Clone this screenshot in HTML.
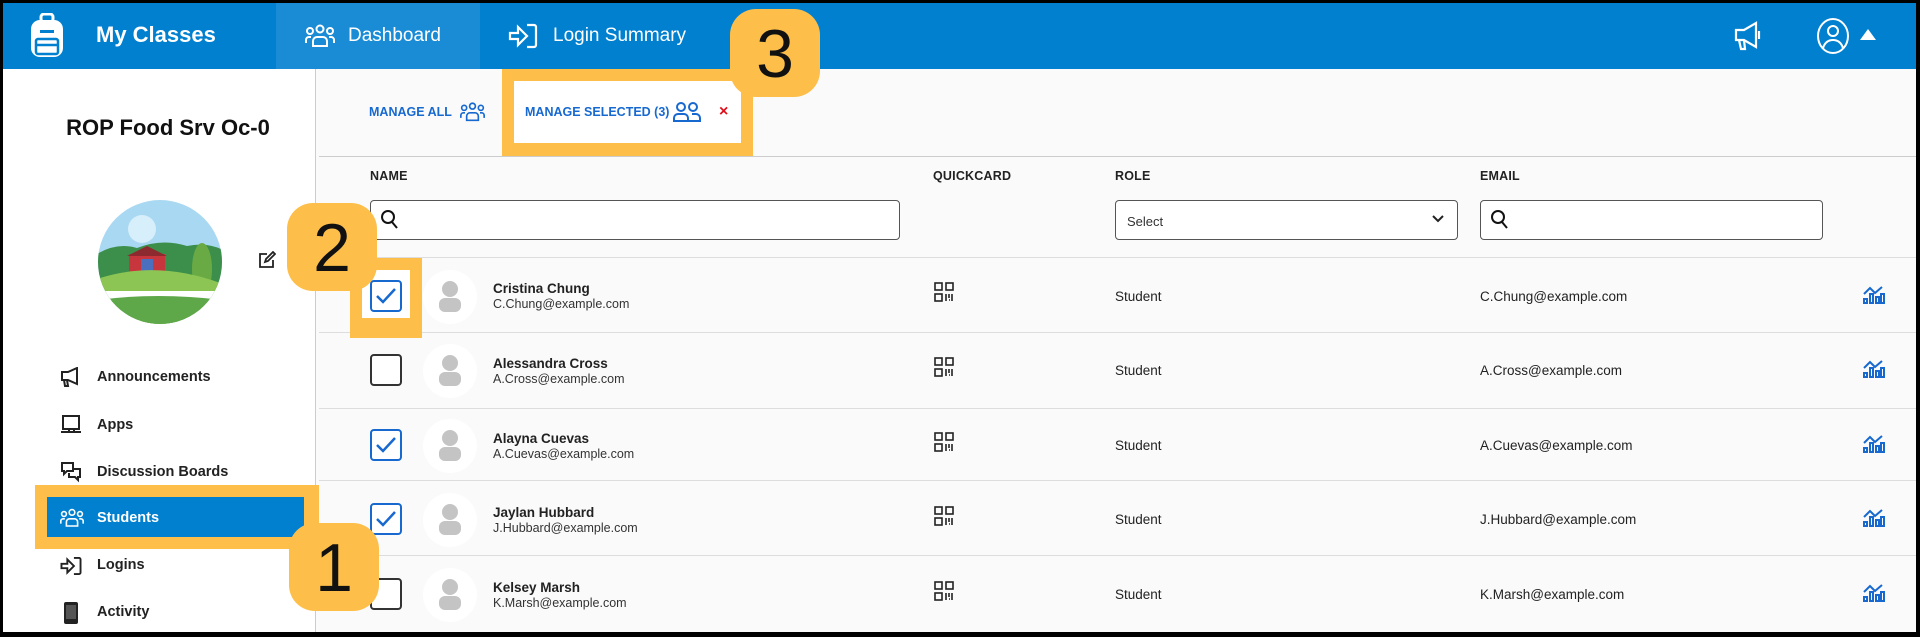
<!DOCTYPE html>
<html><head><meta charset="utf-8"><style>
*{box-sizing:border-box;margin:0;padding:0}
body{width:1920px;height:637px;background:#000;position:relative;overflow:hidden;font-family:"Liberation Sans",sans-serif;color:#222}
.a{position:absolute}
#page{position:absolute;left:3px;top:3px;width:1913px;height:629px;background:#fafafa;overflow:hidden}
.hdr{left:0;top:0;width:1913px;height:66px;background:#0180cf}
.w{color:#fff}
.nav{font-weight:bold;font-size:14.5px;color:#222}
.th{font-weight:bold;font-size:12.5px;color:#222;letter-spacing:.2px}
.box{background:#fff;border:1.5px solid #555;border-radius:4px;height:40px}
.line{height:1px;background:#ddd;left:316px;width:1600px}
.badge{background:#fdbf4a;border-radius:26px;font-size:68px;color:#111;text-align:center;line-height:90px;width:90px;height:88px}
.cb{width:32px;height:32px;border:2px solid #333;border-radius:4px;background:#fff}
.cb.on{border-color:#1769d0}
.av{width:54px;height:54px;border-radius:50%;background:#fff}
.nm{font-size:13.5px;font-weight:bold}
.em{font-size:12.5px;color:#333}
.td{font-size:13.5px;color:#222}
</style></head><body>
<div id="page">
<div class="a hdr"></div>
<div class="a" style="left:273px;top:0;width:204px;height:66px;background:#1a8cd6"></div>
<svg class="a" style="left:25px;top:10px" width="38" height="46" viewBox="0 0 38 46"><rect x="13" y="1" width="12" height="8" rx="3" fill="none" stroke="#fff" stroke-width="3"/><rect x="3" y="7" width="32" height="37" rx="9" fill="#fff"/><rect x="12" y="17" width="14" height="3" fill="#0180cf"/><rect x="8" y="26" width="22" height="15" rx="2" fill="none" stroke="#0180cf" stroke-width="2.5"/><line x1="8" y1="32" x2="30" y2="32" stroke="#0180cf" stroke-width="2.5"/></svg>
<div class="a w" style="left:93px;top:19px;font-size:22px;font-weight:bold">My Classes</div>
<svg class="a" style="left:302px;top:21px" width="30" height="24" viewBox="0 0 30 24" fill="none" stroke="#fff" stroke-width="2"><circle cx="15" cy="5" r="3.5"/><circle cx="5" cy="7" r="3"/><circle cx="25" cy="7" r="3"/><path d="M8 22v-5a4 4 0 0 1 4-4h6a4 4 0 0 1 4 4v5z"/><path d="M1 19v-3a3 3 0 0 1 3-3h2M29 19v-3a3 3 0 0 0-3-3h-2"/></svg>
<div class="a w" style="left:345px;top:22px;font-size:19px">Dashboard</div>
<svg class="a" style="left:505px;top:20px" width="30" height="26" viewBox="0 0 30 26" fill="none" stroke="#fff" stroke-width="2.2"><path d="M2 10h8V4l9 9-9 9v-6H2z"/><path d="M19 2h7a2 2 0 0 1 2 2v18a2 2 0 0 1-2 2h-7"/></svg>
<div class="a w" style="left:550px;top:22px;font-size:19px">Login Summary</div>
<svg class="a" style="left:1730px;top:18px" width="32" height="30" viewBox="0 0 32 30" fill="none" stroke="#fff" stroke-width="2.2"><path d="M3 9h8l12-7v24l-12-7H3z"/><path d="M6 19l2 9h4l-1-9"/><path d="M26 10v8"/></svg>
<svg class="a" style="left:1813px;top:13px" width="36" height="40" viewBox="0 0 36 40" fill="none" stroke="#fff" stroke-width="2"><ellipse cx="17" cy="20" rx="15" ry="17"/><circle cx="17" cy="15" r="5"/><path d="M7 32c2-6 6-8 10-8s8 2 10 8"/></svg>
<svg class="a" style="left:1857px;top:25px" width="16" height="12"><path d="M0 12L8 1l8 11z" fill="#fff"/></svg>

<div class="a" style="left:0;top:66px;width:313px;height:570px;background:#fff;border-right:1px solid #ccc"></div>
<div class="a" style="left:0;top:112px;width:330px;text-align:center;font-size:22px;font-weight:bold;color:#111">ROP Food Srv Oc-0</div>
<svg class="a" style="left:94px;top:196px" width="126" height="126" viewBox="0 0 126 126"><defs><clipPath id="c"><circle cx="63" cy="63" r="62"/></clipPath></defs><g clip-path="url(#c)"><rect width="126" height="126" fill="#a9d8f2"/><circle cx="45" cy="30" r="14" fill="#d7eefb"/><path d="M0 55 q20-12 40-6 q25-10 50-2 q20-4 36 4 v75H0z" fill="#3c8f4a"/><rect x="32" y="55" width="36" height="22" fill="#c8363d"/><path d="M30 57l20-10 20 10z" fill="#8c2a30"/><rect x="44" y="60" width="12" height="17" fill="#4a6fbf"/><ellipse cx="105" cy="70" rx="10" ry="26" fill="#6aaa45"/><path d="M0 80 q60-20 126 5 v41H0z" fill="#8cc554"/><rect x="0" y="92" width="126" height="9" fill="#fff"/><path d="M0 101 q60-8 126 0 v25H0z" fill="#5fa84a"/></g></svg>
<svg class="a" style="left:255px;top:248px" width="18" height="18" viewBox="0 0 18 18" fill="none" stroke="#222" stroke-width="1.8"><path d="M9 3H2v13h13V9"/><path d="M7 11l1-3 7-7 2 2-7 7z"/></svg>

<svg class="a" style="left:57px;top:364px" width="22" height="20" viewBox="0 0 22 20" fill="none" stroke="#222" stroke-width="2"><path d="M2 5h6l9-4v16l-9-4H2z"/><path d="M4 13l1 6h3l-1-6"/></svg>
<div class="a nav" style="left:94px;top:366px">Announcements</div>
<svg class="a" style="left:57px;top:411px" width="22" height="20" viewBox="0 0 22 20" fill="none" stroke="#222" stroke-width="2"><rect x="3" y="2" width="16" height="13"/><path d="M1 18h20M9 18v-3h5v3"/></svg>
<div class="a nav" style="left:94px;top:414px">Apps</div>
<svg class="a" style="left:57px;top:458px" width="22" height="22" viewBox="0 0 22 22" fill="none" stroke="#222" stroke-width="2"><path d="M2 2h11v8H7l-3 3v-3H2z"/><path d="M13 8h7v8h-2v3l-3-3h-6v-4"/></svg>
<div class="a nav" style="left:94px;top:461px">Discussion Boards</div>
<div class="a" style="left:32px;top:482px;width:284px;height:64px;background:#fdbf4a"></div>
<div class="a" style="left:44px;top:494px;width:257px;height:40px;background:#0180cf"></div>
<svg class="a" style="left:57px;top:505px" width="24" height="20" viewBox="0 0 30 24" fill="none" stroke="#fff" stroke-width="2"><circle cx="15" cy="5" r="3.5"/><circle cx="5" cy="7" r="3"/><circle cx="25" cy="7" r="3"/><path d="M8 22v-5a4 4 0 0 1 4-4h6a4 4 0 0 1 4 4v5z"/><path d="M1 19v-3a3 3 0 0 1 3-3h2M29 19v-3a3 3 0 0 0-3-3h-2"/></svg>
<div class="a nav" style="left:94px;top:507px;color:#fff">Students</div>
<svg class="a" style="left:57px;top:553px" width="22" height="20" viewBox="0 0 30 26" fill="none" stroke="#222" stroke-width="2.6"><path d="M2 10h8V4l9 9-9 9v-6H2z"/><path d="M19 2h7a2 2 0 0 1 2 2v18a2 2 0 0 1-2 2h-7"/></svg>
<div class="a nav" style="left:94px;top:554px">Logins</div>
<svg class="a" style="left:60px;top:598px" width="16" height="24" viewBox="0 0 16 24"><rect x="1" y="1" width="14" height="22" rx="2" fill="#222"/><rect x="3" y="4" width="10" height="14" fill="#555"/></svg>
<div class="a nav" style="left:94px;top:601px">Activity</div>

<div class="a" style="left:366px;top:102px;font-size:12.5px;font-weight:bold;color:#1769d0">MANAGE ALL</div>
<svg class="a" style="left:457px;top:99px" width="25" height="20" viewBox="0 0 30 24" fill="none" stroke="#1769d0" stroke-width="2"><circle cx="15" cy="5" r="3.5"/><circle cx="5" cy="7" r="3"/><circle cx="25" cy="7" r="3"/><path d="M8 22v-5a4 4 0 0 1 4-4h6a4 4 0 0 1 4 4v5z"/><path d="M1 19v-3a3 3 0 0 1 3-3h2M29 19v-3a3 3 0 0 0-3-3h-2"/></svg>
<div class="a" style="left:499px;top:66px;width:251px;height:87px;background:#fdbf4a"></div>
<div class="a" style="left:511px;top:78px;width:227px;height:62px;background:#fff"></div>
<div class="a" style="left:522px;top:102px;font-size:12.5px;font-weight:bold;color:#1769d0">MANAGE SELECTED (3)</div>
<svg class="a" style="left:670px;top:99px" width="28" height="20" viewBox="0 0 28 20" fill="none" stroke="#1769d0" stroke-width="2"><circle cx="8" cy="5" r="4"/><circle cx="20" cy="5" r="4"/><path d="M1 19v-3a4 4 0 0 1 4-4h6a4 4 0 0 1 4 4v3zM15 19h12v-3a4 4 0 0 0-4-4h-4"/></svg>
<div class="a" style="left:716px;top:100px;font-size:16px;font-weight:bold;color:#e0101a">×</div>
<div class="a line" style="top:153px;background:#ccc"></div>
<div class="a badge" style="left:727px;top:6px">3</div>

<div class="a th" style="left:367px;top:166px">NAME</div>
<div class="a th" style="left:930px;top:166px">QUICKCARD</div>
<div class="a th" style="left:1112px;top:166px">ROLE</div>
<div class="a th" style="left:1477px;top:166px">EMAIL</div>
<div class="a box" style="left:367px;top:197px;width:530px"></div>
<svg class="a" style="left:377px;top:206px" width="20" height="22" viewBox="0 0 20 22" fill="none" stroke="#111" stroke-width="2"><circle cx="8" cy="8" r="6"/><path d="M12 13l5 6"/></svg>
<div class="a box" style="left:1112px;top:197px;width:343px"></div>
<div class="a" style="left:1124px;top:211px;font-size:13px;color:#333">Select</div>
<svg class="a" style="left:1428px;top:211px" width="14" height="10"><path d="M2 2l5 5 5-5" fill="none" stroke="#222" stroke-width="2"/></svg>
<div class="a box" style="left:1477px;top:197px;width:343px"></div>
<svg class="a" style="left:1487px;top:206px" width="20" height="22" viewBox="0 0 20 22" fill="none" stroke="#111" stroke-width="2"><circle cx="8" cy="8" r="6"/><path d="M12 13l5 6"/></svg>
<div class="a line" style="top:254px"></div>

<div class="a line" style="top:329px"></div>
<div class="a line" style="top:405px"></div>
<div class="a line" style="top:477px"></div>
<div class="a line" style="top:552px"></div>

<div class="a" style="left:347px;top:255px;width:72px;height:80px;background:#fdbf4a"></div>
<div class="a" style="left:359px;top:267px;width:48px;height:48px;background:#fff"></div>

<div class="a cb on" style="left:367px;top:277px"></div><svg class="a" style="left:372px;top:283px" width="22" height="20"><path d="M2 10l6 6 12-13" fill="none" stroke="#1769d0" stroke-width="2.5"/></svg>
<div class="a av" style="left:420px;top:267px"></div><svg class="a" style="left:432px;top:277px" width="30" height="32"><circle cx="15" cy="9" r="8" fill="#c4c4c4"/><rect x="4" y="18" width="22" height="14" rx="6" fill="#c4c4c4"/></svg>
<div class="a nm" style="left:490px;top:278px">Cristina Chung</div><div class="a em" style="left:490px;top:294px">C.Chung@example.com</div>
<div class="a td" style="left:1112px;top:286px">Student</div><div class="a td" style="left:1477px;top:286px">C.Chung@example.com</div>

<div class="a cb" style="left:367px;top:351px"></div>
<div class="a av" style="left:420px;top:341px"></div><svg class="a" style="left:432px;top:351px" width="30" height="32"><circle cx="15" cy="9" r="8" fill="#c4c4c4"/><rect x="4" y="18" width="22" height="14" rx="6" fill="#c4c4c4"/></svg>
<div class="a nm" style="left:490px;top:353px">Alessandra Cross</div><div class="a em" style="left:490px;top:369px">A.Cross@example.com</div>
<div class="a td" style="left:1112px;top:360px">Student</div><div class="a td" style="left:1477px;top:360px">A.Cross@example.com</div>

<div class="a cb on" style="left:367px;top:426px"></div><svg class="a" style="left:372px;top:432px" width="22" height="20"><path d="M2 10l6 6 12-13" fill="none" stroke="#1769d0" stroke-width="2.5"/></svg>
<div class="a av" style="left:420px;top:416px"></div><svg class="a" style="left:432px;top:426px" width="30" height="32"><circle cx="15" cy="9" r="8" fill="#c4c4c4"/><rect x="4" y="18" width="22" height="14" rx="6" fill="#c4c4c4"/></svg>
<div class="a nm" style="left:490px;top:428px">Alayna Cuevas</div><div class="a em" style="left:490px;top:444px">A.Cuevas@example.com</div>
<div class="a td" style="left:1112px;top:435px">Student</div><div class="a td" style="left:1477px;top:435px">A.Cuevas@example.com</div>

<div class="a cb on" style="left:367px;top:500px"></div><svg class="a" style="left:372px;top:506px" width="22" height="20"><path d="M2 10l6 6 12-13" fill="none" stroke="#1769d0" stroke-width="2.5"/></svg>
<div class="a av" style="left:420px;top:490px"></div><svg class="a" style="left:432px;top:500px" width="30" height="32"><circle cx="15" cy="9" r="8" fill="#c4c4c4"/><rect x="4" y="18" width="22" height="14" rx="6" fill="#c4c4c4"/></svg>
<div class="a nm" style="left:490px;top:502px">Jaylan Hubbard</div><div class="a em" style="left:490px;top:518px">J.Hubbard@example.com</div>
<div class="a td" style="left:1112px;top:509px">Student</div><div class="a td" style="left:1477px;top:509px">J.Hubbard@example.com</div>

<div class="a cb" style="left:367px;top:575px"></div>
<div class="a av" style="left:420px;top:565px"></div><svg class="a" style="left:432px;top:575px" width="30" height="32"><circle cx="15" cy="9" r="8" fill="#c4c4c4"/><rect x="4" y="18" width="22" height="14" rx="6" fill="#c4c4c4"/></svg>
<div class="a nm" style="left:490px;top:577px">Kelsey Marsh</div><div class="a em" style="left:490px;top:593px">K.Marsh@example.com</div>
<div class="a td" style="left:1112px;top:584px">Student</div><div class="a td" style="left:1477px;top:584px">K.Marsh@example.com</div>

<svg width="0" height="0" style="position:absolute"><defs>
<g id="qr" fill="none" stroke="#222" stroke-width="1.6"><rect x="1" y="1" width="7" height="7"/><rect x="12" y="1" width="7" height="7"/><rect x="1" y="12" width="7" height="7"/><path d="M12 12v7M15 12v4M18 12v7M15 18h1" /></g>
<g id="an" fill="none" stroke="#1769d0" stroke-width="2"><path d="M1 9l6-6 5 5 7-6"/><rect x="1" y="14" width="3" height="4"/><rect x="7" y="9" width="3" height="9"/><rect x="13" y="12" width="3" height="6"/><rect x="18" y="9" width="3" height="9"/></g>
</defs></svg>
<svg class="a" style="left:931px;top:279px" width="22" height="22"><use href="#qr"/></svg>
<svg class="a" style="left:931px;top:354px" width="22" height="22"><use href="#qr"/></svg>
<svg class="a" style="left:931px;top:429px" width="22" height="22"><use href="#qr"/></svg>
<svg class="a" style="left:931px;top:503px" width="22" height="22"><use href="#qr"/></svg>
<svg class="a" style="left:931px;top:578px" width="22" height="22"><use href="#qr"/></svg>
<svg class="a" style="left:1860px;top:282px" width="24" height="20"><use href="#an"/></svg>
<svg class="a" style="left:1860px;top:356px" width="24" height="20"><use href="#an"/></svg>
<svg class="a" style="left:1860px;top:431px" width="24" height="20"><use href="#an"/></svg>
<svg class="a" style="left:1860px;top:505px" width="24" height="20"><use href="#an"/></svg>
<svg class="a" style="left:1860px;top:580px" width="24" height="20"><use href="#an"/></svg>

<div class="a badge" style="left:284px;top:200px">2</div>
<div class="a badge" style="left:286px;top:520px">1</div>
</div>
</body></html>
